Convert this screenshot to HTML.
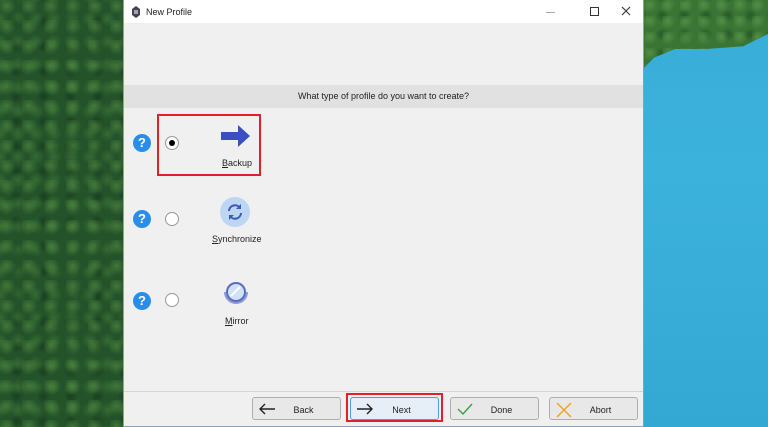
<!DOCTYPE html>
<html><head><meta charset="utf-8"><style>
*{margin:0;padding:0;box-sizing:border-box}
body{width:768px;height:427px;overflow:hidden;position:relative;font-family:"Liberation Sans",sans-serif;font-size:9px;color:#222;
background:#1f4a26}
.forest{position:absolute;left:0;top:0;width:124px;height:427px;
background:
radial-gradient(circle at 30% 30%,rgba(90,150,70,.55) 0,transparent 9px) 0 0/22px 20px,
radial-gradient(circle at 60% 60%,rgba(70,130,60,.5) 0,transparent 8px) 7px 5px/18px 23px,
radial-gradient(circle at 50% 50%,rgba(20,50,25,.6) 0,transparent 7px) 3px 9px/27px 25px,
#24532a}
.lake{position:absolute;left:644px;top:0;width:124px;height:427px;background:linear-gradient(180deg,#38acd6 0,#3bb2dc 40%,#33a8d2 100%)}
.trees{position:absolute;left:644px;top:0;width:124px;height:68px;background:
radial-gradient(circle at 30% 30%,rgba(100,160,80,.6) 0,transparent 8px) 0 0/18px 16px,
radial-gradient(circle at 60% 60%,rgba(20,60,25,.5) 0,transparent 7px) 5px 4px/22px 19px,#3a7535;
clip-path:polygon(0 0,100% 0,100% 50%,80% 68%,50% 72%,25% 72%,8% 85%,0 100%)}
.win{position:absolute;left:123px;top:0;width:521px;height:427px;background:#f0f0f0;border:1px solid #8aa0b8;border-top:none}
.title{height:23px;background:#fff;position:relative}
.title span{position:absolute;left:22px;top:7px;font-size:9px;color:#222}
.banner{position:absolute;left:0;top:85px;width:519px;height:23px;background:#e1e1e1;text-align:center;line-height:23px;font-size:9px;color:#222}
.q{position:absolute;left:9px;width:18px;height:18px;border-radius:50%;background:#2a8ee8;color:#fff;font-weight:bold;font-size:13px;text-align:center;line-height:18px}
.r{position:absolute;left:41px;width:14px;height:14px;border-radius:50%;background:#fff;border:1px solid #999}
.lbl{position:absolute;font-size:9px;color:#222}
.sep{position:absolute;left:0;top:391px;width:519px;height:1px;background:#d4d4d4}
.btn{position:absolute;top:397px;height:23px;width:89px;border:1px solid #adadad;border-radius:3px;background:#e8e8e8;font-size:9px}
.btn b{font-weight:normal;position:absolute;left:0;right:0;text-align:center;top:7px;padding-left:14px}
.btn svg{position:absolute;left:5px;top:4px}
</style></head><body>
<div class="forest"></div><div class="lake"></div><div class="trees"></div>
<div class="win">
 <div class="title">
  <svg style="position:absolute;left:7px;top:6px" width="10" height="12" viewBox="0 0 10 12"><path d="M5 0 L9 3 L9 9 L5 12 L1 9 L1 3Z" fill="#445"/><path d="M3 5h4M3 7h4" stroke="#fff" stroke-width="1"/></svg>
  <span>New Profile</span>
  <div style="position:absolute;left:422px;top:12px;width:9px;height:1px;background:#aaa"></div>
  <div style="position:absolute;left:466px;top:7px;width:9px;height:9px;border:1px solid #333"></div>
  <svg style="position:absolute;left:497px;top:6px" width="10" height="10"><path d="M1 1L9 9M9 1L1 9" stroke="#333" stroke-width="1.1"/></svg>
 </div>
 <div class="banner">What type of profile do you want to create?</div>
 <div class="q" style="top:134px">?</div>
 <div class="r" style="top:136px"><div style="position:absolute;left:3px;top:3px;width:6px;height:6px;border-radius:50%;background:#000"></div></div>
 <div style="position:absolute;left:33px;top:114px;width:104px;height:62px;border:2px solid #e0202a"></div>
 <svg style="position:absolute;left:97px;top:125px" width="30" height="22" viewBox="0 0 30 22"><path d="M0 7H17V0L29 11L17 22V15H0Z" fill="#3b4fc0"/></svg>
 <div class="lbl" style="left:98px;top:158px"><u>B</u>ackup</div>
 <div class="q" style="top:210px">?</div>
 <div class="r" style="top:212px"></div>
 <div style="position:absolute;left:96px;top:197px;width:30px;height:30px;border-radius:50%;background:#bcd6f4"></div>
 <svg style="position:absolute;left:101px;top:202px" width="20" height="20" viewBox="0 0 20 20"><path d="M4 9A6 6 0 0 1 15 6" stroke="#3b59b8" stroke-width="2" fill="none"/><path d="M16 2V7H11" fill="#3b59b8"/><path d="M16 11A6 6 0 0 1 5 14" stroke="#3b59b8" stroke-width="2" fill="none"/><path d="M4 18V13H9" fill="#3b59b8"/></svg>
 <div class="lbl" style="left:88px;top:234px"><u>S</u>ynchronize</div>
 <div class="q" style="top:292px">?</div>
 <div class="r" style="top:293px"></div>
 <svg style="position:absolute;left:98px;top:280px" width="28" height="26" viewBox="0 0 28 26"><path d="M3 12A11 11 0 0 0 25 12" stroke="#8a9ad8" stroke-width="2" fill="none"/><circle cx="14" cy="12" r="9" fill="#cfe2f8" stroke="#5a6cc0" stroke-width="2"/><path d="M9 16L18 7" stroke="#fff" stroke-width="2"/></svg>
 <div class="lbl" style="left:101px;top:316px"><u>M</u>irror</div>
 <div class="sep"></div>
 <div class="btn" style="left:128px"><svg width="18" height="14"><path d="M17 7H2M7 2L2 7L7 12" stroke="#222" stroke-width="1.4" fill="none"/></svg><b>Back</b></div>
 <div style="position:absolute;left:222px;top:393px;width:97px;height:29px;border:2px solid #e0202a"></div>
 <div class="btn" style="left:226px;border-color:#5a9ad8;background:#e6eef8"><svg width="18" height="14"><path d="M1 7H16M11 2L16 7L11 12" stroke="#222" stroke-width="1.4" fill="none"/></svg><b>Next</b></div>
 <div class="btn" style="left:326px"><svg width="18" height="14"><path d="M2 7L7 12L16 2" stroke="#3aa040" stroke-width="1.4" fill="none"/></svg><b>Done</b></div>
 <div class="btn" style="left:425px"><svg width="18" height="16"><path d="M2 1L16 15M16 1L2 15" stroke="#f0a020" stroke-width="1.4" fill="none"/></svg><b>Abort</b></div>
</div>
</body></html>
